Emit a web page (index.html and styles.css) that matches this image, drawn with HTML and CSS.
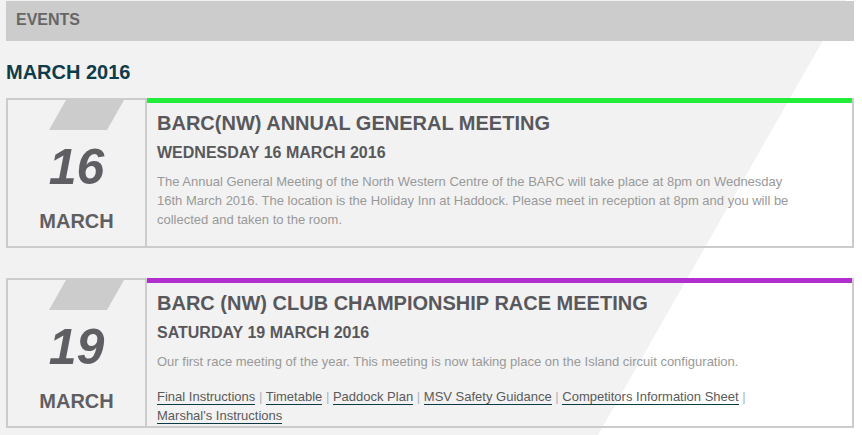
FILE: index.html
```html
<!DOCTYPE html>
<html lang="en">
<head>
<meta charset="utf-8">
<title>Events</title>
<link rel="stylesheet" href="styles.css">
</head>
<body>
<div class="page">
  <div class="section-head">EVENTS</div>
  <h2 class="month">MARCH 2016</h2>

  <div class="card">
    <div class="date">
      <svg class="tab" width="137" height="30" viewBox="0 0 137 30"><polygon points="58,0 116,0 99,30 41,30" fill="#cccccc"/></svg>
      <div class="day">16</div>
      <div class="mon">MARCH</div>
    </div>
    <div class="info green">
      <h3 class="title">BARC(NW) ANNUAL GENERAL MEETING</h3>
      <h4 class="when">WEDNESDAY 16 MARCH 2016</h4>
      <p class="text">The Annual General Meeting of the North Western Centre of the BARC will take place at 8pm on Wednesday 16th March 2016. The location is the Holiday Inn at Haddock. Please meet in reception at 8pm and you will be collected and taken to the room.</p>
    </div>
  </div>

  <div class="card">
    <div class="date">
      <svg class="tab" width="137" height="30" viewBox="0 0 137 30"><polygon points="58,0 116,0 99,30 41,30" fill="#cccccc"/></svg>
      <div class="day">19</div>
      <div class="mon">MARCH</div>
    </div>
    <div class="info purple">
      <h3 class="title">BARC (NW) CLUB CHAMPIONSHIP RACE MEETING</h3>
      <h4 class="when">SATURDAY 19 MARCH 2016</h4>
      <p class="text">Our first race meeting of the year. This meeting is now taking place on the Island circuit configuration.</p>
      <p class="text links"><a href="#">Final Instructions</a> <span class="sep">|</span> <a href="#">Timetable</a> <span class="sep">|</span> <a href="#">Paddock Plan</a> <span class="sep">|</span> <a href="#">MSV Safety Guidance</a> <span class="sep">|</span> <a href="#">Competitors Information Sheet</a> <span class="sep">|</span> <a href="#">Marshal's Instructions</a></p>
    </div>
  </div>
</div>
</body>
</html>
```

FILE: styles.css
```css
html, body {
  margin: 0;
  padding: 0;
  background: #ffffff;
}

body {
  font-family: "Liberation Sans", Arial, sans-serif;
}

.page {
  position: relative;
  z-index: 0;
  min-height: 435px;
  box-sizing: border-box;
  padding: 1px 8px 0 6px;
}

.page::before {
  content: "";
  position: absolute;
  inset: 0;
  z-index: -1;
  background: #f2f2f2;
  clip-path: polygon(0 0, 846px 0, 598px 435px, 0 435px);
}

.section-head {
  height: 40px;
  line-height: 38px;
  background: #cccccc;
  padding-left: 10px;
  font-size: 16px;
  font-weight: bold;
  color: #666666;
}

.month {
  margin: 19px 0 14px;
  font-size: 20px;
  line-height: 24px;
  font-weight: bold;
  color: #0f3c4a;
}

.card {
  display: flex;
  border: 2px solid #cccccc;
  border-top: 0;
  margin-bottom: 30px;
}

.date {
  width: 137px;
  flex: none;
  border-top: 2px solid #cccccc;
  border-right: 2px solid #cccccc;
  text-align: center;
  color: #5f5f63;
  font-weight: bold;
  padding-bottom: 13px;
}

.tab {
  display: block;
}

.day {
  margin-top: 12px;
  font-size: 50px;
  line-height: 50px;
  font-style: italic;
}

.mon {
  margin-top: 17px;
  font-size: 20px;
  line-height: 24px;
}

.info {
  flex: 1;
  padding: 8px 50px 0 10px;
  color: #58585c;
}

.info.green {
  border-top: 5px solid #22ee3a;
}

.info.purple {
  border-top: 5px solid #b22fcf;
}

.title {
  margin: 0;
  font-size: 20px;
  line-height: 25px;
  font-weight: bold;
}

.when {
  margin: 7px 0 0;
  font-size: 16px;
  line-height: 20px;
  font-weight: bold;
}

.text {
  margin: 9px 0 0;
  font-size: 13px;
  line-height: 19px;
  color: #999999;
}

.text.links {
  margin-top: 16px;
}

.links a {
  color: #5a5a5a;
  text-decoration: none;
  border-bottom: 1px solid #0c3b48;
}

.sep {
  color: #a9b5c0;
}
```
